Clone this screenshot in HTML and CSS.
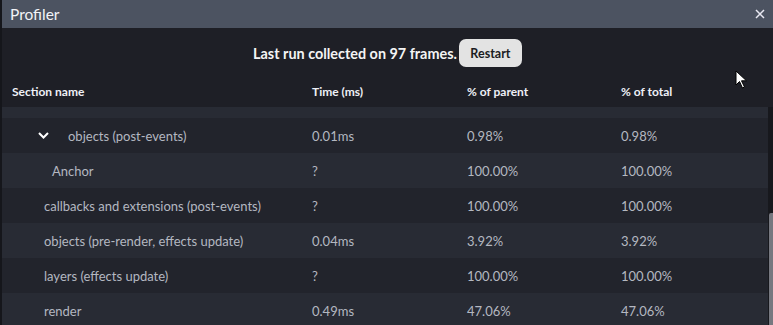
FILE: index.html
```html
<!DOCTYPE html>
<html lang="en">
<head>
    <meta charset="UTF-8">
    <title>Profiler</title>
    <link rel="stylesheet" href="styles.css">
</head>
<body>
    <div class="window">
        <!-- Title bar -->
        <div class="titlebar">
            <span class="title">Profiler</span>
            <svg class="close" width="10" height="10" viewBox="0 0 10 10">
                <path d="M1 1 L9 9 M9 1 L1 9" stroke="#e8e8f2" stroke-width="1.5" fill="none"/>
            </svg>
        </div>

        <div class="summary">
            <span>Last run collected on 97 frames.</span>
            <button class="restart">Restart</button>
        </div>

        <div class="head row">
            <span>Section name</span>
            <span>Time (ms)</span>
            <span>% of parent</span>
            <span>% of total</span>
        </div>

        <div class="body">
            <div class="viewport">
                <div class="rows">
                    <div class="row odd"><span></span><span></span><span></span><span></span></div>
                    <div class="row even">
                        <span class="name lvl1">
                            <svg class="chev" width="11" height="7" viewBox="0 0 11 7">
                                <path d="M1 1 L5.5 5.5 L10 1" stroke="#ffffff" stroke-width="2" fill="none"/>
                            </svg>
                            objects (post-events)
                        </span>
                        <span>0.01ms</span><span>0.98%</span><span>0.98%</span>
                    </div>
                    <div class="row odd">
                        <span class="name lvl2">Anchor</span>
                        <span>?</span><span>100.00%</span><span>100.00%</span>
                    </div>
                    <div class="row even">
                        <span class="name">callbacks and extensions (post-events)</span>
                        <span>?</span><span>100.00%</span><span>100.00%</span>
                    </div>
                    <div class="row odd">
                        <span class="name">objects (pre-render, effects update)</span>
                        <span>0.04ms</span><span>3.92%</span><span>3.92%</span>
                    </div>
                    <div class="row even">
                        <span class="name">layers (effects update)</span>
                        <span>?</span><span>100.00%</span><span>100.00%</span>
                    </div>
                    <div class="row odd">
                        <span class="name">render</span>
                        <span>0.49ms</span><span>47.06%</span><span>47.06%</span>
                    </div>
                </div>
            </div>
            <div class="scrollbar"><div class="thumb"></div></div>
        </div>

        <!-- mouse pointer -->
        <svg class="cursor" width="14" height="20" viewBox="0 0 14 20">
            <path d="M1 1 L1 15 L4.5 11.5 L7.5 18 L9.5 17 L6.5 10.8 L11.5 10.8 Z" fill="#ffffff" stroke="#000000" stroke-width="1"/>
        </svg>
    </div>
</body>
</html>
```

FILE: styles.css
```css
* {
    margin: 0;
    padding: 0;
    box-sizing: border-box;
}

body {
    font-family: 'Lato', 'Noto Sans', sans-serif;
    background-color: #15161b;
    color: #ffffff;
    width: 773px;
    height: 325px;
    overflow: hidden;
}

.window {
    position: relative;
    margin-left: 2px;
    height: 325px;
    background-color: #1e1f26;
    display: flex;
    flex-direction: column;
}

.titlebar {
    height: 28px;
    background-color: #4c5361;
    display: flex;
    align-items: center;
    justify-content: space-between;
    padding: 0 8px 0 8px;
}

.title {
    font-size: 15.5px;
    color: #f2f4f8;
}

.summary {
    height: 48px;
    display: flex;
    align-items: center;
    justify-content: center;
    gap: 2px;
    padding-top: 2px;
    font-size: 14.4px;
    font-weight: 700;
    color: #f4f4f4;
}

.restart {
    font-family: inherit;
    font-size: 12.5px;
    font-weight: 700;
    color: #1b1c22;
    background-color: #e3e3e3;
    border: none;
    border-radius: 7px;
    width: 63px;
    height: 28px;
}

.row {
    display: grid;
    grid-template-columns: 300px 155px 154px 1fr;
    align-items: center;
    padding-left: 10px;
    height: 35px;
    font-size: 13px;
    color: #b4b8c1;
}

.head {
    height: 31px;
    font-size: 12px;
    font-weight: 700;
    color: #eef0f6;
}

.body {
    flex: 1;
    display: flex;
    overflow: hidden;
}

.viewport {
    flex: 1;
    overflow: hidden;
}

.rows {
    margin-top: -24px;
}

.row.odd {
    background-color: #282b34;
}

.row.even {
    background-color: #22242c;
}

.name {
    display: flex;
    align-items: center;
    padding-left: 32px;
}

.name.lvl1 {
    padding-left: 26px;
}

.name.lvl2 {
    padding-left: 40px;
}

.chev {
    margin-right: 19px;
}

.scrollbar {
    width: 5px;
    background-color: #17181d;
}

.thumb {
    margin-top: 106px;
    margin-left: 1px;
    height: 120px;
    background-color: #767880;
    border-radius: 2px 0 0 0;
}

.cursor {
    position: absolute;
    left: 733px;
    top: 70px;
}
```
